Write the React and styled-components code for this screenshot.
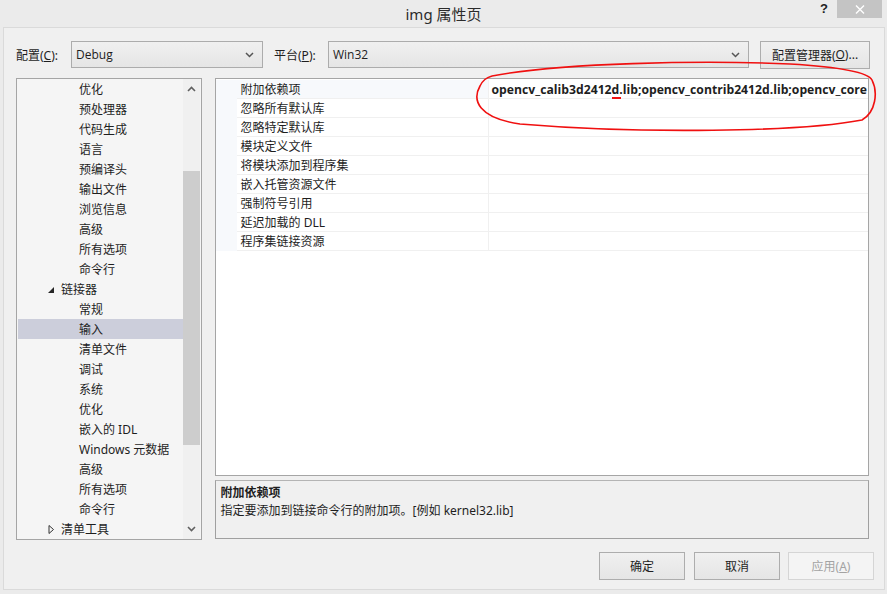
import React from "react";
import styled, { createGlobalStyle } from "styled-components";

const GlobalStyle = createGlobalStyle`
  html, body {
    margin: 0;
    padding: 0;
    background: #ebebeb;
  }
  body {
    font-family: "Noto Sans", "Noto Sans CJK SC", sans-serif;
    font-size: 12px;
    color: #1e1e1e;
  }
`;

const cjk = `"Noto Sans", "Noto Sans CJK SC", sans-serif`;

const Window = styled.div`
  position: relative;
  width: 887px;
  height: 594px;
  background: #ebebeb;
  display: flex;
  flex-direction: column;
  overflow: hidden;
`;

const TitleBar = styled.div`
  height: 27px;
  display: flex;
  align-items: flex-start;
  position: relative;
  flex-shrink: 0;
`;

const Title = styled.div`
  position: absolute;
  left: 0;
  right: 0;
  top: 3px;
  text-align: center;
  font-family: ${cjk};
  font-size: 15px;
  color: #2b2b2b;
`;

const Caption = styled.div`
  margin-left: auto;
  display: flex;
  align-items: flex-start;
  margin-right: 5px;
`;

const HelpGlyph = styled.div`
  font-family: "Liberation Sans", sans-serif;
  font-weight: bold;
  font-size: 13px;
  color: #222;
  margin: 1px 9px 0 0;
`;

const CloseButton = styled.div`
  width: 45px;
  height: 18px;
  background: #c4c4c4;
  display: flex;
  align-items: center;
  justify-content: center;
`;

const Client = styled.div`
  flex: 1;
  margin: 0 2px 4px 3px;
  border: 1px solid #dadada;
  background: #f0f0f0;
  padding: 13px 15px 0 12px;
  display: flex;
  flex-direction: column;
`;

const Toolbar = styled.div`
  display: flex;
  align-items: center;
  height: 27px;
`;

const Label = styled.span`
  font-family: ${cjk};
  font-size: 12px;
  width: ${({ $w }) => $w}px;
  flex-shrink: 0;
  u { text-decoration: underline; }
`;

const Combo = styled.div`
  width: ${({ $w }) => $w}px;
  height: 27px;
  box-sizing: border-box;
  border: 1px solid #acacac;
  background: linear-gradient(#f0f0f0, #e5e5e5);
  display: flex;
  align-items: center;
  padding: 0 8px 0 4px;
  font-family: "Open Sans", sans-serif;
  font-size: 12px;
  margin-right: ${({ $gap }) => $gap}px;
  flex-shrink: 0;
  span { flex: 1; }
`;

const PushButton = styled.div`
  width: ${({ $w }) => $w}px;
  height: 28px;
  box-sizing: border-box;
  border: 1px solid ${({ $disabled }) => ($disabled ? "#d5d5d5" : "#adadad")};
  background: ${({ $disabled }) => ($disabled ? "#f4f4f4" : "linear-gradient(#f0f0f0, #e5e5e5)")};
  color: ${({ $disabled }) => ($disabled ? "#a3a3a3" : "#1e1e1e")};
  display: flex;
  align-items: center;
  justify-content: center;
  font-family: ${cjk};
  font-size: 12px;
  flex-shrink: 0;
  u { text-decoration: underline; }
`;

const Main = styled.div`
  display: flex;
  margin-top: 10px;
  gap: 13px;
`;

const Tree = styled.div`
  width: 186px;
  height: 462px;
  box-sizing: border-box;
  border: 1px solid #a5a5a5;
  background: #f5f5f5;
  display: flex;
  padding: 0 1px 0 1px;
`;

const TreeList = styled.div`
  flex: 1;
  display: flex;
  flex-direction: column;
`;

const TreeRow = styled.div`
  height: 20px;
  display: flex;
  align-items: center;
  padding-left: ${({ $child }) => ($child ? 61 : 30)}px;
  background: ${({ $selected }) => ($selected ? "#cccedb" : "transparent")};
  font-family: ${cjk};
  font-size: 12px;
  white-space: nowrap;
`;

const Expander = styled.span`
  width: 13px;
  display: inline-flex;
  align-items: center;
  flex-shrink: 0;
`;

const ScrollBar = styled.div`
  width: 17px;
  background: #f0f0f0;
  display: flex;
  flex-direction: column;
  align-items: center;
`;

const ScrollArrow = styled.div`
  height: 20px;
  display: flex;
  align-items: center;
  justify-content: center;
`;

const ScrollTrack = styled.div`
  flex: 1;
  width: 100%;
  display: flex;
  flex-direction: column;
  padding-top: 72px;
  box-sizing: border-box;
`;

const ScrollThumb = styled.div`
  height: 274px;
  background: #cdcdcd;
`;

const RightColumn = styled.div`
  width: 656px;
  display: flex;
  flex-direction: column;
  gap: 4px;
`;

const Grid = styled.div`
  height: 398px;
  box-sizing: border-box;
  border: 1px solid #a5a5a5;
  background: #ffffff;
  display: flex;
  flex-direction: column;
  padding-top: 1px;
  overflow: hidden;
`;

const GridRow = styled.div`
  display: flex;
  height: 19px;
  flex-shrink: 0;
`;

const Gutter = styled.div`
  width: 21px;
  background: #f7f9fc;
  flex-shrink: 0;
`;

const NameCell = styled.div`
  width: 252px;
  padding-left: 4px;
  display: flex;
  align-items: center;
  background: ${({ $active }) => ($active ? "#f7f9fc" : "#ffffff")};
  border-bottom: 1px solid #f0f0f0;
  border-right: 1px solid #f0f0f0;
  font-family: ${cjk};
  font-size: 12px;
  white-space: nowrap;
  box-sizing: border-box;
  flex-shrink: 0;
`;

const ValueCell = styled.div`
  flex: 1;
  display: flex;
  align-items: center;
  padding-left: 3px;
  border-bottom: 1px solid #f0f0f0;
  font-family: "Open Sans", sans-serif;
  font-weight: bold;
  font-size: 12.2px;
  white-space: nowrap;
  overflow: hidden;
  box-sizing: border-box;
`;

const GutterFill = styled.div`
  flex: 1;
  width: 21px;
  background: #ffffff;
`;

const Description = styled.div`
  height: 59px;
  box-sizing: border-box;
  border: 1px solid #a0a0a0;
  border-top-color: #b4b4b4;
  background: #f0f0f0;
  padding: 3px 0 0 5px;
  font-family: ${cjk};
  font-size: 12px;
`;

const DescTitle = styled.div`
  font-weight: bold;
  line-height: 18px;
`;

const DescText = styled.div`
  line-height: 18px;
`;

const Footer = styled.div`
  display: flex;
  justify-content: flex-end;
  gap: 8px;
  margin-top: 12px;
  margin-right: -5px;
`;

const Annotation = styled.svg`
  position: absolute;
  left: 0;
  top: 0;
  pointer-events: none;
`;

const treeItems = [
  { text: "优化" },
  { text: "预处理器" },
  { text: "代码生成" },
  { text: "语言" },
  { text: "预编译头" },
  { text: "输出文件" },
  { text: "浏览信息" },
  { text: "高级" },
  { text: "所有选项" },
  { text: "命令行" },
  { text: "链接器", group: "open" },
  { text: "常规" },
  { text: "输入", selected: true },
  { text: "清单文件" },
  { text: "调试" },
  { text: "系统" },
  { text: "优化" },
  { text: "嵌入的 IDL" },
  { text: "Windows 元数据" },
  { text: "高级" },
  { text: "所有选项" },
  { text: "命令行" },
  { text: "清单工具", group: "closed" },
];

const properties = [
  { name: "附加依赖项", value: "opencv_calib3d2412d.lib;opencv_contrib2412d.lib;opencv_core" },
  { name: "忽略所有默认库" },
  { name: "忽略特定默认库" },
  { name: "模块定义文件" },
  { name: "将模块添加到程序集" },
  { name: "嵌入托管资源文件" },
  { name: "强制符号引用" },
  { name: "延迟加载的 DLL" },
  { name: "程序集链接资源" },
];

const Chevron = ({ up }) => (
  <svg width="9" height="6" viewBox="0 0 9 6">
    <path d={up ? "M1 5 L4.5 1.5 L8 5" : "M1 1 L4.5 4.5 L8 1"} fill="none" stroke="#606060" strokeWidth="1.6" />
  </svg>
);

const ComboArrow = () => (
  <svg width="9" height="6" viewBox="0 0 9 6">
    <path d="M1 1 L4.5 4.5 L8 1" fill="none" stroke="#555" strokeWidth="1.5" />
  </svg>
);

const Triangle = ({ open }) => (
  <svg width="7" height="9" viewBox="0 0 7 9">
    {open ? (
      <path d="M6 2 L6 8 L0 8 Z" fill="#262626" />
    ) : (
      <path d="M1 0.5 L5.5 4.5 L1 8.5 Z" fill="none" stroke="#333" strokeWidth="1" />
    )}
  </svg>
);

const App = () => (
  <>
    <GlobalStyle />
    <Window>
      <TitleBar>
        <Title>img 属性页</Title>
        <Caption>
          <HelpGlyph>?</HelpGlyph>
          <CloseButton>
            <svg width="10" height="9" viewBox="0 0 10 9">
              <path d="M1 0.5 L9 8.5 M9 0.5 L1 8.5" stroke="#fff" strokeWidth="1.4" />
            </svg>
          </CloseButton>
        </Caption>
      </TitleBar>

      <Client>
        <Toolbar>
          <Label $w={55}>配置(<u>C</u>):</Label>
          <Combo $w={192} $gap={11}>
            <span>Debug</span>
            <ComboArrow />
          </Combo>
          <Label $w={54}>平台(<u>P</u>):</Label>
          <Combo $w={421} $gap={11}>
            <span>Win32</span>
            <ComboArrow />
          </Combo>
          <PushButton $w={110}>配置管理器(<u>O</u>)...</PushButton>
        </Toolbar>

        <Main>
          <Tree>
            <TreeList>
              {treeItems.map((item, i) => (
                <TreeRow key={i} $child={!item.group} $selected={item.selected}>
                  {item.group && (
                    <Expander>
                      <Triangle open={item.group === "open"} />
                    </Expander>
                  )}
                  <span>{item.text}</span>
                </TreeRow>
              ))}
            </TreeList>
            <ScrollBar>
              <ScrollArrow>
                <Chevron up />
              </ScrollArrow>
              <ScrollTrack>
                <ScrollThumb />
              </ScrollTrack>
              <ScrollArrow>
                <Chevron />
              </ScrollArrow>
            </ScrollBar>
          </Tree>

          <RightColumn>
            <Grid>
              {properties.map((p, i) => (
                <GridRow key={p.name}>
                  <Gutter />
                  <NameCell $active={i === 0}>{p.name}</NameCell>
                  <ValueCell>{p.value || ""}</ValueCell>
                </GridRow>
              ))}
              <GutterFill />
            </Grid>
            <Description>
              <DescTitle>附加依赖项</DescTitle>
              <DescText>指定要添加到链接命令行的附加项。[例如 kernel32.lib]</DescText>
            </Description>
          </RightColumn>
        </Main>

        <Footer>
          <PushButton $w={86}>确定</PushButton>
          <PushButton $w={86} style={{ marginLeft: 1 }}>取消</PushButton>
          <PushButton $w={86} $disabled>应用(<u>A</u>)</PushButton>
        </Footer>
      </Client>

      {/* hand-drawn red marker around the dependency value */}
      <Annotation width="887" height="594" viewBox="0 0 887 594">
        <path
          d="M492 76 C560 63 700 60 790 64 C840 67 868 72 872 80 C878 92 876 112 862 120 C800 132 640 134 520 124 C478 118 472 100 480 86 C483 80 486 78 492 76"
          fill="none"
          stroke="#f01010"
          strokeWidth="1.6"
        />
        <path d="M612 98 L621 98" stroke="#f01010" strokeWidth="2" />
      </Annotation>
    </Window>
  </>
);

export default App;
